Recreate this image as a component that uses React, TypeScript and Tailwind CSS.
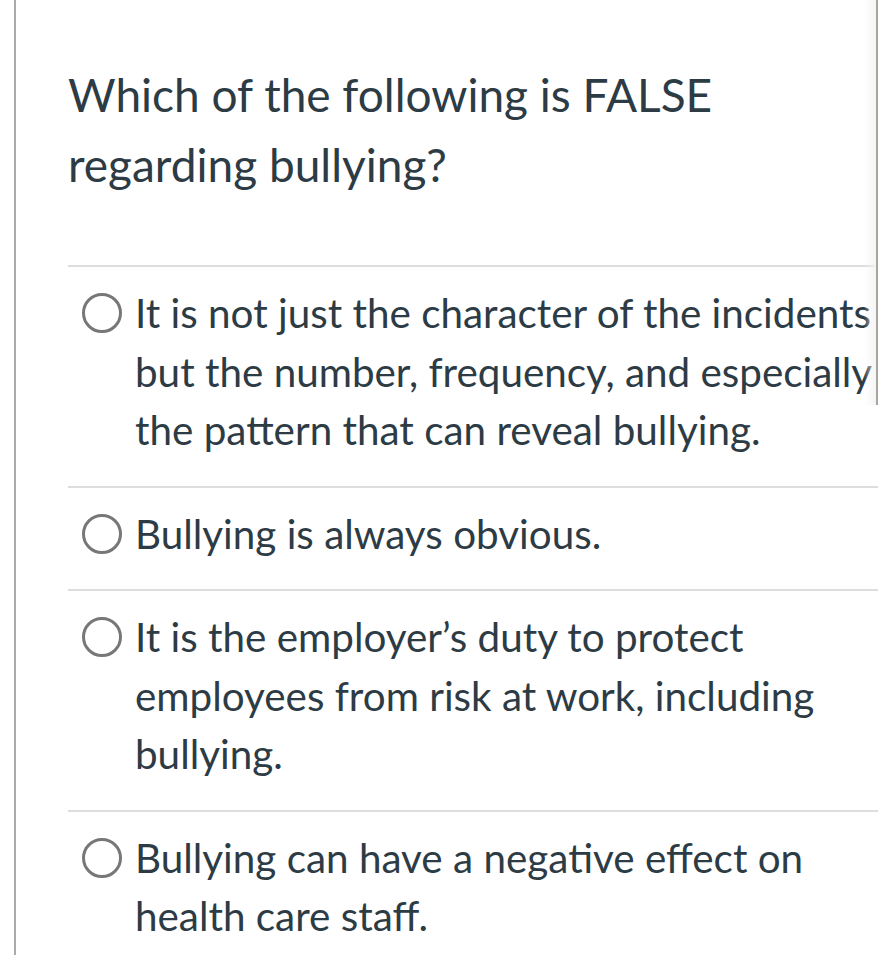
import React from "react";

const answers = [
  "It is not just the character of the incidents but the number, frequency, and especially the pattern that can reveal bullying.",
  "Bullying is always obvious.",
  "It is the employer\u2019s duty to protect employees from risk at work, including bullying.",
  "Bullying can have a negative effect on health care staff.",
];

export default function App() {
  return (
    <div
      className="relative w-[878px] h-[955px] overflow-hidden bg-white text-[#2d3b45]"
      style={{ fontFamily: "Lato, 'Open Sans', sans-serif" }}
    >
      <div className="absolute right-0 top-0 h-[405px] w-[14px] bg-gradient-to-r from-transparent to-[#f3f3f3]" />
      <div className="absolute right-0 top-0 h-[405px] w-[2px] bg-[#a9a6a0]" />
      <div className="ml-[14px] h-full border-l-2 border-[#aaaaaa] pl-[52px]">
        <div className="pt-[60px] pb-[65px] text-[46px] leading-[70px]">
          Which of the following is FALSE regarding bullying?
        </div>
        {answers.map((a, i) => (
          <div key={i} className="border-t-2 border-[#dddddd] pt-[17px] pb-[26px] flex">
            <div className="ml-[14px] mt-[9px] w-[40px] h-[40px] shrink-0 rounded-full border-[3px] border-[#777777]" />
            <div className="ml-[13px] text-[40.4px] leading-[58.5px] pr-[2px]">{a}</div>
          </div>
        ))}
      </div>
    </div>
  );
}
